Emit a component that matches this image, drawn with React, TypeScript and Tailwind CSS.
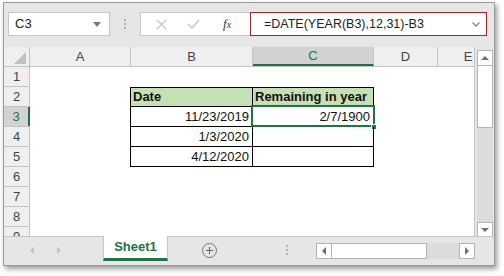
import { Plus } from 'lucide-react';

const ui = "font-['Liberation_Sans',Arial,sans-serif]";

function RowHead({ n, active }: { n: number; active?: boolean }) {
    return (
        <div
            className={`w-[26px] shrink-0 h-full flex items-center justify-center border-r border-[#c4c4c4] ${active
                ? 'bg-[#d2d2d2] text-[#217346] border-r-2 border-r-[#217346]'
                : 'bg-[#efefef] text-[#444]'
                }`}
        >
            {n}
        </div>
    );
}

export default function App() {
    const data = ['11/23/2019', '1/3/2020', '4/12/2020'];

    return (
        <div className={`w-[504px] h-[276px] bg-white pt-[2px] pl-[3px] ${ui}`}>
            <div className="w-[492px] h-[264px] border border-[#9a9a9a] bg-[#e6e6e6] flex flex-col shadow-[2px_3px_5px_rgba(0,0,0,0.4)]">
                {/* formula bar */}
                <div className="h-[44px] shrink-0 flex items-center pl-[4px] pb-[2px]">
                    <div className="w-[102px] h-[24px] bg-white border border-[#c6c6c6] flex items-center justify-between pl-[6px] pr-[8px] text-[13px] text-[#222]">
                        <span>C3</span>
                        <svg width="8" height="5" viewBox="0 0 8 5"><path d="M0 0h8L4 5z" fill="#7a7a7a" /></svg>
                    </div>
                    <div className="w-[30px] flex flex-col items-center gap-[2px]">
                        <div className="w-[2px] h-[2px] bg-[#b4b4b4]" />
                        <div className="w-[2px] h-[2px] bg-[#b4b4b4]" />
                        <div className="w-[2px] h-[2px] bg-[#b4b4b4]" />
                    </div>
                    <div className="w-[110px] h-[24px] bg-white border border-r-0 border-[#c6c6c6] flex items-center">
                        <svg className="ml-[15px]" width="11" height="11" viewBox="0 0 11 11"><path d="M1 1l9 9M10 1l-9 9" stroke="#c4c4c4" strokeWidth="1.3" /></svg>
                        <svg className="ml-[20px]" width="13" height="10" viewBox="0 0 13 10"><path d="M1 5l4 4 7-8" stroke="#c4c4c4" strokeWidth="1.4" fill="none" /></svg>
                        <span className="ml-[23px] font-['Liberation_Serif',serif] italic text-[13px] text-[#333]">f<span className="text-[10px]">x</span></span>
                    </div>
                    <div className="w-[237px] h-[24px] bg-white border border-[#a4262c] flex items-center justify-between pl-[13px] pr-[6px] text-[12.5px] text-[#222]">
                        <span>=DATE(YEAR(B3),12,31)-B3</span>
                        <svg width="8" height="5" viewBox="0 0 8 5"><path d="M0.5 0.5L4 4l3.5-3.5" stroke="#888" strokeWidth="1.4" fill="none" /></svg>
                    </div>
                </div>

                {/* sheet area */}
                <div className="h-[190px] shrink-0 flex">
                    <div className="w-[471px] shrink-0 bg-white border-r border-[#c6c6c6] overflow-hidden flex flex-col text-[13px]">
                        {/* column headers */}
                        <div className="h-[20px] shrink-0 flex bg-[#efefef] border-b border-[#c4c4c4] text-[#444]">
                            <div className="w-[26px] shrink-0 border-r border-[#c4c4c4] flex items-end justify-end pr-[3px] pb-[2px]">
                                <svg width="12" height="12" viewBox="0 0 12 12"><path d="M12 0V12H0z" fill="#c0c0c0" /></svg>
                            </div>
                            <div className="w-[101px] shrink-0 border-r border-[#c4c4c4] flex items-center justify-center">A</div>
                            <div className="w-[122px] shrink-0 border-r border-[#c4c4c4] flex items-center justify-center">B</div>
                            <div className="w-[121px] shrink-0 border-r border-[#c4c4c4] bg-[#d2d2d2] border-b-2 border-b-[#217346] text-[#217346] flex items-center justify-center">C</div>
                            <div className="w-[64px] shrink-0 border-r border-[#c4c4c4] flex items-center justify-center">D</div>
                            <div className="flex-1 flex items-center justify-center pl-[24px]">E</div>
                        </div>

                        {/* row 1 */}
                        <div className="h-[20px] shrink-0 flex">
                            <div className="border-b border-[#c4c4c4] flex"><RowHead n={1} /></div>
                        </div>

                        {/* row 2: table header */}
                        <div className="h-[20px] shrink-0 flex">
                            <div className="border-b border-[#c4c4c4] flex"><RowHead n={2} /></div>
                            <div className="w-[100px] shrink-0" />
                            <div className="w-[123px] shrink-0 bg-[#c6e0b4] border border-black font-bold text-[#111] pl-[2px] flex items-center">Date</div>
                            <div className="w-[121px] shrink-0 bg-[#c6e0b4] border-y border-r border-black font-bold text-[#111] pl-[2px] flex items-center">Remaining in year</div>
                        </div>

                        {/* data rows */}
                        {data.map((d, i) => (
                            <div key={d} className="h-[20px] shrink-0 flex">
                                <div className="border-b border-[#c4c4c4] flex"><RowHead n={i + 3} active={i === 0} /></div>
                                <div className="w-[100px] shrink-0" />
                                <div className="w-[123px] shrink-0 border-x border-b border-black text-[#111] pr-[3px] flex items-center justify-end">{d}</div>
                                <div className="w-[121px] shrink-0 border-r border-b border-black text-[#111] pr-[3px] flex items-center justify-end relative">
                                    {i === 0 && (
                                        <>
                                            2/7/1900
                                            <div className="absolute -left-[2px] -top-[2px] -right-[2px] -bottom-[1px] border-2 border-[#217346]" />
                                            <div className="absolute -right-[4px] -bottom-[4px] w-[6px] h-[6px] bg-[#217346] border border-white" />
                                        </>
                                    )}
                                </div>
                            </div>
                        ))}

                        {[6, 7, 8, 9].map(n => (
                            <div key={n} className="h-[20px] shrink-0 flex">
                                <div className="border-b border-[#c4c4c4] flex"><RowHead n={n} /></div>
                            </div>
                        ))}
                    </div>

                    {/* vertical scrollbar */}
                    <div className="w-[19px] shrink-0 flex flex-col items-center pt-[3px]">
                        <div className="w-[16px] h-[16px] bg-white border border-[#b4b4b4] flex items-center justify-center">
                            <svg width="8" height="4" viewBox="0 0 8 4"><path d="M0 4h8L4 0z" fill="#707070" /></svg>
                        </div>
                        <div className="w-[16px] h-[62px] bg-white border-x border-b border-[#b4b4b4]" />
                        <div className="w-[16px] flex-1 bg-[#dcdcdc]" />
                        <div className="w-[16px] h-[15px] bg-white border border-[#b4b4b4] flex items-center justify-center">
                            <svg width="8" height="4" viewBox="0 0 8 4"><path d="M0 0h8L4 4z" fill="#707070" /></svg>
                        </div>
                    </div>
                </div>

                {/* sheet tabs */}
                <div className="h-[28px] shrink-0 flex items-start border-t border-[#c6c6c6] -mt-px">
                    <div className="w-[99px] h-[26px] flex items-center pl-[26px] gap-[23px]">
                        <svg width="4" height="7" viewBox="0 0 4 7"><path d="M4 0v7L0 3.5z" fill="#c2c2c2" /></svg>
                        <svg width="4" height="7" viewBox="0 0 4 7"><path d="M0 0v7l4-3.5z" fill="#c2c2c2" /></svg>
                    </div>
                    <div className="w-[65px] h-[25px] -mt-px bg-white border-x border-[#c6c6c6] border-b-[3px] border-b-[#217346] flex items-center justify-center font-bold text-[13px] text-[#217346]">
                        Sheet1
                    </div>
                    <div className="w-[90px] h-[26px] flex items-center pl-[34px]">
                        <div className="w-[15px] h-[15px] rounded-full border border-[#777] flex items-center justify-center">
                            <Plus className="w-[11px] h-[11px] text-[#666]" strokeWidth={2.2} />
                        </div>
                    </div>
                    <div className="w-[58px] h-[26px] flex flex-col items-center justify-center gap-[2px]">
                        <div className="w-[2px] h-[2px] bg-[#b4b4b4]" />
                        <div className="w-[2px] h-[2px] bg-[#b4b4b4]" />
                        <div className="w-[2px] h-[2px] bg-[#b4b4b4]" />
                    </div>
                    <div className="mt-[6px] w-[159px] h-[16px] flex">
                        <div className="w-[16px] h-full bg-white border border-[#b4b4b4] flex items-center justify-center">
                            <svg width="4" height="8" viewBox="0 0 4 8"><path d="M4 0v8L0 4z" fill="#707070" /></svg>
                        </div>
                        <div className="w-[95px] h-full bg-white border-y border-r border-[#b4b4b4]" />
                        <div className="flex-1 h-full bg-[#dcdcdc]" />
                        <div className="w-[16px] h-full bg-white border border-[#b4b4b4] flex items-center justify-center">
                            <svg width="4" height="8" viewBox="0 0 4 8"><path d="M0 0v8l4-4z" fill="#707070" /></svg>
                        </div>
                    </div>
                </div>
            </div>
        </div>
    );
}
